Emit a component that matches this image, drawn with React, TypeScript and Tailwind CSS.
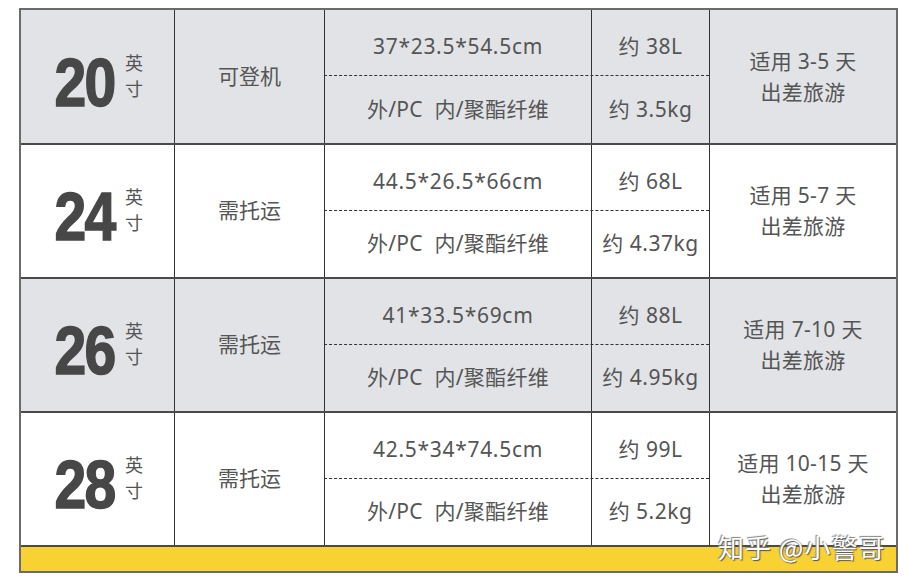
import React from "react";

type Row = {
  size: string;
  type: string;
  dim: string;
  vol: string;
  weight: string;
  days: string;
  grey: boolean;
};

const rows: Row[] = [
  { size: "20", type: "可登机", dim: "37*23.5*54.5cm", vol: "约 38L", weight: "约 3.5kg", days: "适用 3-5 天", grey: true },
  { size: "24", type: "需托运", dim: "44.5*26.5*66cm", vol: "约 68L", weight: "约 4.37kg", days: "适用 5-7 天", grey: false },
  { size: "26", type: "需托运", dim: "41*33.5*69cm", vol: "约 88L", weight: "约 4.95kg", days: "适用 7-10 天", grey: true },
  { size: "28", type: "需托运", dim: "42.5*34*74.5cm", vol: "约 99L", weight: "约 5.2kg", days: "适用 10-15 天", grey: false },
];

export default function App() {
  return (
    <div
      className="relative w-[910px] h-[585px] bg-white pt-[8px] pl-[19px] text-[#555]"
      style={{ fontFamily: '"Noto Sans", "Noto Sans CJK SC", sans-serif' }}
    >
      <div className="w-[879px] border-2 border-[#6b6b6b] flex flex-col">
        {rows.map((r, i) => (
          <div
            key={i}
            className={`flex ${i === 0 ? "h-[133px]" : "h-[134px] border-t-2 border-[#4a4a4a]"} ${
              r.grey ? "bg-[#e2e3e7]" : "bg-white"
            }`}
          >
            <div className="w-[153px] flex items-center justify-end pr-[31px] gap-[10px] pt-[10px]">
              <span
                className="text-[68px] leading-none font-bold text-[#474747] tracking-[-2px] scale-x-[0.84] origin-right [-webkit-text-stroke:1.5px_#474747]"
                style={{ fontFamily: '"Liberation Sans", Arial, sans-serif' }}
              >
                {r.size}
              </span>
              <span className="flex flex-col text-[18px] leading-[26px] -mt-[12px] text-[#555]">
                <span>英</span>
                <span>寸</span>
              </span>
            </div>
            <div className="w-[150px] border-l border-[#333] flex items-center justify-center text-[21px]">
              {r.type}
            </div>
            <div className="w-[385px] flex flex-col">
              <div className="h-[66px] flex border-b border-dashed border-[#333]">
                <div className="w-[267px] border-l border-[#333] flex items-center justify-center pt-[9px] text-[21px] tracking-[0.7px]">
                  {r.dim}
                </div>
                <div className="w-[118px] border-l border-[#333] flex items-center justify-center pt-[9px] text-[21px] tracking-[0.5px]">
                  {r.vol}
                </div>
              </div>
              <div className="flex-1 flex">
                <div className="w-[267px] border-l border-[#333] flex items-center justify-center text-[21px] tracking-[0.3px]">
                  外/PC&nbsp;&nbsp;内/聚酯纤维
                </div>
                <div className="w-[118px] border-l border-[#333] flex items-center justify-center text-[21px] tracking-[0.5px]">
                  {r.weight}
                </div>
              </div>
            </div>
            <div className="w-[187px] border-l border-[#333] flex flex-col items-center justify-center text-[21px] leading-[31px] tracking-[0.3px]">
              <span>{r.days}</span>
              <span>出差旅游</span>
            </div>
          </div>
        ))}
        <div className="h-[26px] bg-[#f8d133] border-t-2 border-[#4a4a4a]" />
      </div>
      <div
        className="absolute left-[718px] top-[531px] text-[26px] leading-[32px] text-white tracking-[1px] [text-shadow:1px_1px_1px_#555,-1px_-1px_1px_#888]"
        style={{ fontFamily: '"Noto Sans CJK SC", sans-serif' }}
      >
        知乎 @小警哥
      </div>
    </div>
  );
}
